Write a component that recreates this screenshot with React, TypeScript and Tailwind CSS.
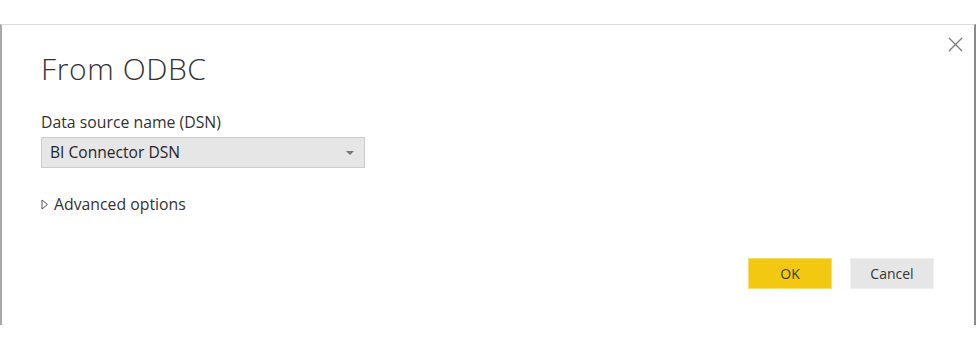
import React from "react";

export default function App() {
  return (
    <div className="w-[977px] h-[350px] bg-white pt-[24px]" style={{ fontFamily: '"Open Sans", "Noto Sans", sans-serif' }}>
      <div className="relative w-[976px] h-[301px] border-t border-t-[#dcdcdc] border-l-2 border-l-[#a8a8a8] border-r-2 border-r-[#8a8a8a] bg-white">
        <button className="absolute left-[945px] top-[11px] w-[16px] h-[16px] flex items-center justify-center">
          <svg width="15" height="15" viewBox="0 0 15 15">
            <path d="M1 1 L14 14 M14 1 L1 14" stroke="#7a7a7a" strokeWidth="1.3" fill="none" />
          </svg>
        </button>
        <div className="pl-[39px] pt-[26px] flex flex-col">
          <h1 className="text-[30px] leading-[36px] font-light text-[#333333] tracking-[0.6px]">From ODBC</h1>
          <div className="mt-[25px] text-[15.8px] leading-[20px] text-[#333333]">Data source name (DSN)</div>
          <div className="mt-[5px] w-[324px] h-[31px] bg-[#e6e6e6] border border-[#cccccc] flex items-center justify-between pl-[8px] pr-[10px]">
            <span className="text-[15.6px] text-[#252525]">BI Connector DSN</span>
            <svg width="8" height="4" viewBox="0 0 8 4">
              <path d="M0 0 L8 0 L4 4 Z" fill="#777777" />
            </svg>
          </div>
          <div className="mt-[25px] flex items-center gap-[5px]">
            <svg width="8" height="11" viewBox="0 0 8 11">
              <path d="M1 1 L6.5 5.5 L1 10 Z" stroke="#555555" strokeWidth="1" fill="none" strokeLinejoin="round" />
            </svg>
            <span className="text-[15.8px] leading-[22px] text-[#333333]">Advanced options</span>
          </div>
        </div>
        <div className="absolute left-[746px] top-[233px] flex gap-[18px]">
          <button className="w-[84px] h-[31px] bg-[#f2c811] border border-[#f7dc6a] text-[14px] text-[#3b3b1b]">OK</button>
          <button className="w-[84px] h-[31px] bg-[#e6e6e6] border border-[#eeeeee] text-[14px] text-[#333333]">Cancel</button>
        </div>
      </div>
    </div>
  );
}
